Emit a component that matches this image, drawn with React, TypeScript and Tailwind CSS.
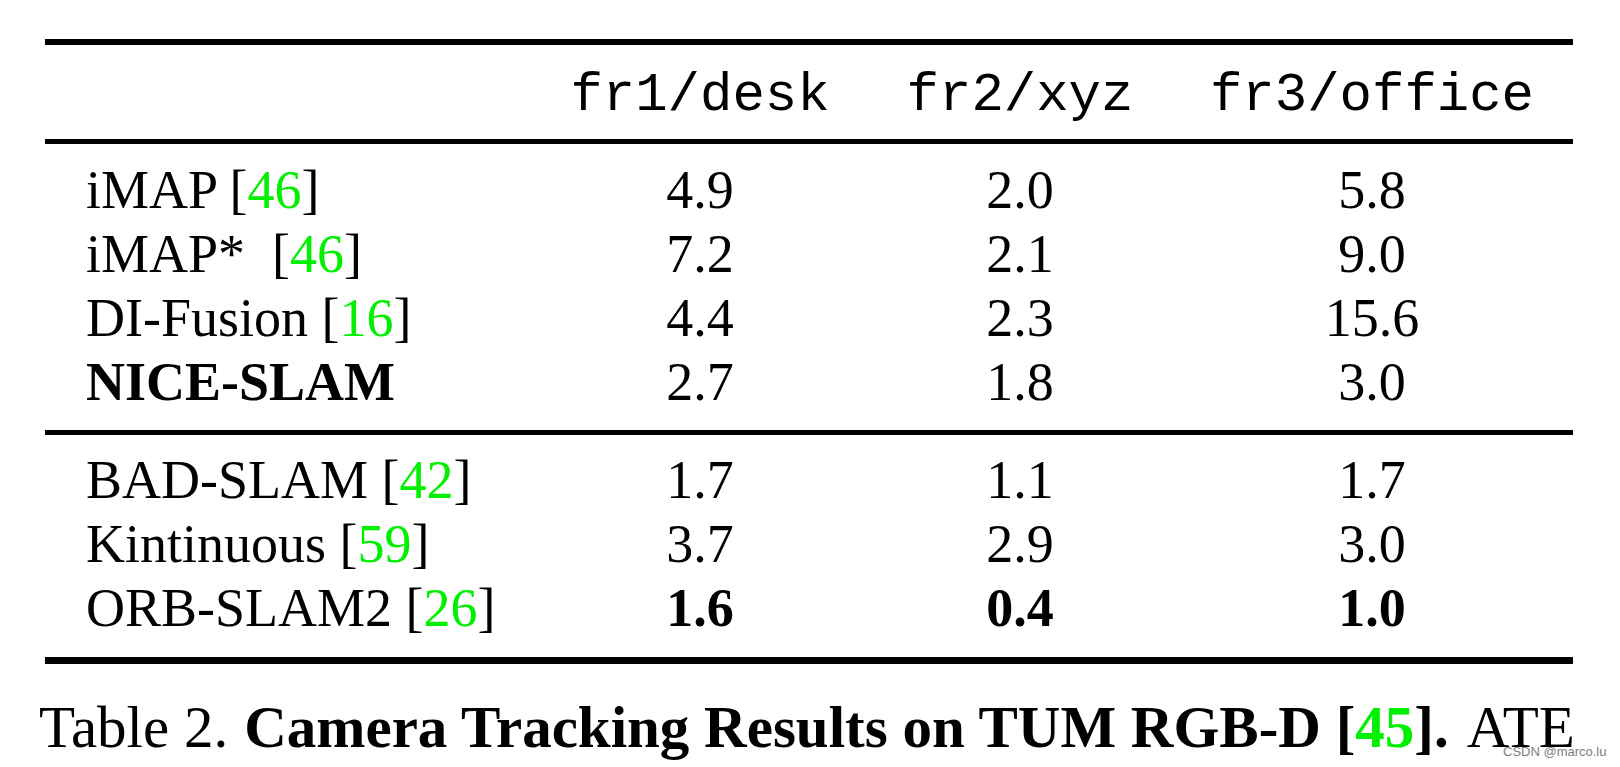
import React from "react";

type Row = {
  name: string;
  cite?: string;
  bold?: boolean;
  values: { v: string; best?: boolean }[];
};

const groupA: Row[] = [
  { name: "iMAP", cite: "46", values: [{ v: "4.9" }, { v: "2.0" }, { v: "5.8" }] },
  { name: "iMAP*", cite: "46", values: [{ v: "7.2" }, { v: "2.1" }, { v: "9.0" }] },
  { name: "DI-Fusion", cite: "16", values: [{ v: "4.4" }, { v: "2.3" }, { v: "15.6" }] },
  { name: "NICE-SLAM", bold: true, values: [{ v: "2.7" }, { v: "1.8" }, { v: "3.0" }] },
];

const groupB: Row[] = [
  { name: "BAD-SLAM", cite: "42", values: [{ v: "1.7" }, { v: "1.1" }, { v: "1.7" }] },
  { name: "Kintinuous", cite: "59", values: [{ v: "3.7" }, { v: "2.9" }, { v: "3.0" }] },
  {
    name: "ORB-SLAM2",
    cite: "26",
    values: [
      { v: "1.6", best: true },
      { v: "0.4", best: true },
      { v: "1.0", best: true },
    ],
  },
];

const headers = ["fr1/desk", "fr2/xyz", "fr3/office"];

const Cite = ({ n }: { n: string }) => (
  <span>
    [<span className="text-[#00f000]">{n}</span>]
  </span>
);

const TableRow = ({ row }: { row: Row }) => (
  <div className="grid grid-cols-[495px_320px_320px_384px] leading-[64px]">
    <div className={`pl-[41px] whitespace-pre ${row.bold ? "font-bold" : ""}`}>
      {row.name}
      {row.cite && (
        <>
          {row.name.endsWith("*") ? "  " : " "}
          <Cite n={row.cite} />
        </>
      )}
    </div>
    {row.values.map((c, i) => (
      <div key={i} className={`text-center ${c.best ? "font-bold" : ""}`}>
        {c.v}
      </div>
    ))}
  </div>
);

export default function App() {
  return (
    <div className="relative w-[1620px] h-[767px] bg-white text-black overflow-hidden font-['Liberation_Serif','Times_New_Roman',serif]">
      <div className="pt-[39px] pl-[45px] w-[1573px]">
        {/* top rule */}
        <div className="h-[6px] bg-black" />

        {/* header */}
        <div className="grid grid-cols-[495px_320px_320px_384px] pt-[19px] pb-[11px] leading-[64px] text-[54px] font-['Liberation_Mono','Courier_New',monospace]">
          <div />
          {headers.map((h) => (
            <div key={h} className="text-center">
              {h}
            </div>
          ))}
        </div>

        <div className="h-[5px] bg-black" />

        <div className="pt-[14px] pb-[16px] text-[54px]">
          {groupA.map((r) => (
            <TableRow key={r.name} row={r} />
          ))}
        </div>

        <div className="h-[5px] bg-black" />

        <div className="pt-[13px] pb-[17px] text-[54px]">
          {groupB.map((r) => (
            <TableRow key={r.name} row={r} />
          ))}
        </div>

        {/* bottom rule */}
        <div className="h-[7px] bg-black" />
      </div>

      {/* caption */}
      <p className="pl-[39px] pt-[28px] text-[59px] leading-[70px] whitespace-nowrap">
        Table 2.<span className="ml-[16px]" />
        <span className="font-bold">
          Camera Tracking Results on TUM RGB-D [<span className="text-[#00f000]">45</span>].
        </span>
        <span className="ml-[18px]" />ATE
      </p>

      <span className="absolute left-[1503px] top-[744px] text-[13px] leading-[16px] text-[#7d7d7d] font-['Liberation_Sans',Arial,sans-serif]">
        CSDN @marco.lu
      </span>
    </div>
  );
}
